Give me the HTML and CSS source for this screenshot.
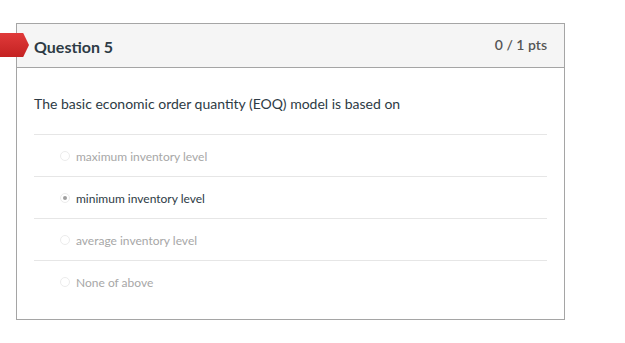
FILE: index.html
```html
<!DOCTYPE html>
<html lang="en">
<head>
    <meta charset="UTF-8">
    <title>Question 5</title>
    <link rel="stylesheet" href="styles.css">
</head>
<body>
    <div class="page">
        <div class="question">
            <span class="flag"></span>
            <div class="question-header">
                <h2 class="question-title">Question 5</h2>
                <span class="points">0 / 1 pts</span>
            </div>

            <div class="question-body">
                <p class="question-text">The basic economic order quantity (EOQ) model is based on</p>

                <!-- Antworten -->
                <div class="answers">
                    <label class="answer">
                        <span class="radio"></span>
                        <span class="answer-text">maximum inventory level</span>
                    </label>
                    <label class="answer selected">
                        <span class="radio"></span>
                        <span class="answer-text">minimum inventory level</span>
                    </label>
                    <label class="answer">
                        <span class="radio"></span>
                        <span class="answer-text">average inventory level</span>
                    </label>
                    <label class="answer">
                        <span class="radio"></span>
                        <span class="answer-text">None of above</span>
                    </label>
                </div>
            </div>
        </div>
    </div>
</body>
</html>
```

FILE: styles.css
```css
body {
    margin: 0;
    font-family: Lato, "Open Sans", sans-serif;
    background-color: #ffffff;
    color: #2d3b45;
}
.page {
    padding: 23px 0 0 16px;
}
.question {
    position: relative;
    width: 547px;
    border: 1px solid #a5a5a5;
    background: #ffffff;
}
.flag {
    position: absolute;
    left: -17px;
    top: 9px;
    width: 29px;
    height: 24px;
    background: linear-gradient(#e03a3a, #c42222);
    clip-path: polygon(0 0, 80% 0, 100% 50%, 80% 100%, 0 100%);
}
.question-header {
    display: flex;
    justify-content: space-between;
    align-items: center;
    height: 43px;
    padding: 0 17px;
    background-color: #f5f5f5;
    border-bottom: 1px solid #a5a5a5;
}
.question-title {
    margin: 2px 0 0;
    font-size: 16px;
    font-weight: bold;
    color: #2d3b45;
}
.points {
    font-size: 14px;
    font-weight: 600;
    color: #555555;
    margin-top: -2px;
}
.question-body {
    padding: 26px 17px 17px;
}
.question-text {
    margin: 0 0 20px;
    font-size: 14px;
    line-height: 20px;
}
.answer {
    display: flex;
    align-items: center;
    gap: 6px;
    height: 40px;
    padding: 1px 0 0 26px;
    border-top: 1px solid #e6e6e6;
    font-size: 12px;
    color: #a7a7a7;
}
.answer.selected {
    color: #2d3b45;
}
.radio {
    width: 10px;
    height: 10px;
    border: 1px solid #ececec;
    border-radius: 50%;
    box-sizing: border-box;
    display: flex;
    align-items: center;
    justify-content: center;
}
.answer.selected .radio::after {
    content: "";
    width: 4px;
    height: 4px;
    border-radius: 50%;
    background: #a0a0a0;
}
```
